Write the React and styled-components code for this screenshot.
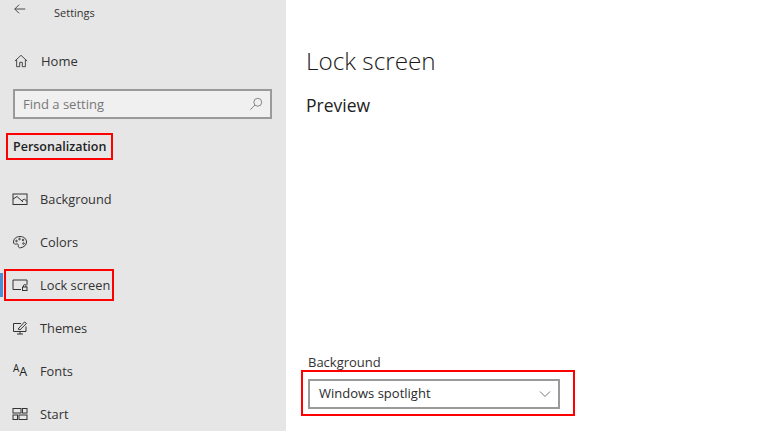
import React from 'react'
import styled, { createGlobalStyle } from 'styled-components'

const GlobalStyle = createGlobalStyle`
  html, body { margin: 0; padding: 0; height: 100%; background: #fff; overflow: hidden; }
  body { font-family: "Open Sans", "Noto Sans", "Liberation Sans", sans-serif; color: #1f1f1f; }
`

const Page = styled.div`
  display: flex;
  width: 768px;
  height: 431px;
  overflow: hidden;
`

const Sidebar = styled.aside`
  width: 286px;
  flex: none;
  background: #e6e6e6;
  box-sizing: border-box;
  position: relative;
`

const TitleBar = styled.div`
  display: flex;
  align-items: center;
  height: 24px;
  padding-left: 13px;
  font-size: 11px;
  color: #333;
  svg { align-self: flex-start; margin-top: 2px; }
  span { margin-left: 27px; }
`

const HomeRow = styled.div`
  display: flex;
  align-items: center;
  height: 26px;
  margin-top: 24px;
  padding-left: 14px;
  font-size: 13px;
  color: #333;
  span { margin-left: 13px; }
`

const SearchBox = styled.div`
  display: flex;
  align-items: center;
  justify-content: space-between;
  box-sizing: border-box;
  width: 259px;
  height: 30px;
  margin: 15px 0 0 13px;
  padding: 0 7px 0 8px;
  background: #f0f0f0;
  border: 2px solid #9a9a9a;
  font-size: 13px;
  color: #777;
`

const RedFrame = styled.div`
  box-sizing: border-box;
  border: 2px solid #ff0000;
  display: inline-flex;
  align-items: center;
`

const GroupFrame = styled(RedFrame)`
  width: 107px;
  height: 27px;
  margin: 14px 0 0 6px;
  padding-left: 5px;
  font-size: 12.5px;
  font-weight: 600;
  color: #222;
`

const NavList = styled.nav`
  display: flex;
  flex-direction: column;
  margin-top: 17px;
`

const NavRow = styled.div`
  display: flex;
  align-items: center;
  height: 43px;
  padding-left: 12px;
  font-size: 12.8px;
  color: #333;
  position: relative;
  span { margin-left: 12px; }
`

const ActiveFrame = styled(RedFrame)`
  position: absolute;
  left: 4px;
  top: 6px;
  width: 110px;
  height: 32px;
`

const ActiveBar = styled.div`
  position: absolute;
  left: 0;
  top: 10px;
  width: 3px;
  height: 24px;
  background: #4a90d0;
`

const Main = styled.main`
  flex: 1;
  padding: 40px 0 0 20px;
  display: flex;
  flex-direction: column;
`

const Heading = styled.h1`
  margin: 0;
  font-size: 24.3px;
  font-weight: 300;
  line-height: 42px;
  color: #1a1a1a;
`

const SubHeading = styled.h2`
  margin: 1px 0 0;
  font-size: 17.5px;
  font-weight: 400;
  line-height: 44px;
  color: #222;
`

const FieldLabel = styled.div`
  margin: 227px 0 0 2px;
  font-size: 13px;
  line-height: 16px;
  color: #333;
`

const SelectFrame = styled(RedFrame)`
  width: 274px;
  height: 46px;
  margin: 0 0 0 -5px;
  padding: 2px 0 0 5px;
`

const Select = styled.div`
  display: flex;
  align-items: center;
  justify-content: space-between;
  box-sizing: border-box;
  width: 252px;
  height: 30px;
  padding: 0 7px 2px 9px;
  border: 2px solid #9a9a9a;
  font-size: 13px;
  color: #2a2a2a;
  svg { margin-top: 2px; }
`

const Icon = ({ children, w = 16, h = 16 }) => (
  <svg width={w} height={h} viewBox="0 0 16 16" fill="none" stroke="#333" strokeWidth="1">
    {children}
  </svg>
)

const icons = {
  Background: (
    <>
      <rect x="1" y="3" width="14" height="10.5" />
      <path d="M1 8 L5 5.5 L11 11 M10 9.5 L12.5 8 L15 10.5" />
    </>
  ),
  Colors: (
    <>
      <path d="M8 2.5 C4 2.5 1.5 5 1.5 8 C1.5 10 3 10.5 4.5 10 C6 9.7 6.5 10.5 6.3 11.5 C6 13 7 14 8.5 13.8 C12 13.3 14.5 11 14.5 8 C14.5 5 12 2.5 8 2.5 Z" />
      <circle cx="4.5" cy="7" r=".8" />
      <circle cx="7.5" cy="5" r=".8" />
      <circle cx="11" cy="6" r=".8" />
      <circle cx="11.5" cy="9.5" r=".8" />
    </>
  ),
  'Lock screen': (
    <>
      <path d="M9 12.5 H1 V3 H15 V8" />
      <rect x="10.5" y="10" width="4.5" height="3.5" />
      <path d="M11.5 10 V8.8 a1 1 0 0 1 2.5 0 V10" />
    </>
  ),
  Themes: (
    <>
      <path d="M9 3.5 H1.5 V11.5 H14 V6.5" />
      <path d="M8 11.5 V14 M5 14 H11" />
      <path d="M6 9 L12.5 2 L14.5 3.5 L8 9.8 Z" />
    </>
  ),
  Start: (
    <>
      <rect x="1" y="2.5" width="8" height="4.5" />
      <rect x="10.5" y="2.5" width="4.5" height="4.5" />
      <rect x="1" y="9" width="4.5" height="4.5" />
      <rect x="7" y="9" width="8" height="4.5" />
    </>
  ),
}

const FontsGlyph = styled.div`
  width: 16px;
  height: 16px;
  display: flex;
  align-items: flex-start;
  justify-content: center;
  font-size: 12.5px;
  line-height: 18px;
  color: #222;
  small { font-size: 10px; line-height: 11px; }
`

const navItems = ['Background', 'Colors', 'Lock screen', 'Themes', 'Fonts', 'Start']

const App = () => (
  <>
    <GlobalStyle />
    <Page>
      <Sidebar>
        <TitleBar>
          <Icon w={14} h={14}>
            <path d="M14 8 H2 M7 3 L2 8 L7 13" />
          </Icon>
          <span>Settings</span>
        </TitleBar>
        <HomeRow>
          <Icon w={14} h={14}>
            <path d="M1 8 L8 1.5 L15 8 M3 6.5 V14.5 H6.5 V9.5 H9.5 V14.5 H13 V6.5" />
          </Icon>
          <span>Home</span>
        </HomeRow>
        <SearchBox>
          Find a setting
          <Icon w={14} h={14}>
            <circle cx="10" cy="6" r="4.5" stroke="#777" />
            <path d="M6.8 9.2 L1.5 14.5" stroke="#777" />
          </Icon>
        </SearchBox>
        <GroupFrame>Personalization</GroupFrame>
        <NavList>
          {navItems.map((item) => (
            <NavRow key={item}>
              {item === 'Lock screen' && <ActiveFrame />}
              {item === 'Lock screen' && <ActiveBar />}
              {item === 'Fonts' ? (
                <FontsGlyph>
                  <small>A</small>A
                </FontsGlyph>
              ) : (
                <Icon>{icons[item]}</Icon>
              )}
              <span>{item}</span>
            </NavRow>
          ))}
        </NavList>
      </Sidebar>
      <Main>
        <Heading>Lock screen</Heading>
        <SubHeading>Preview</SubHeading>
        <FieldLabel>Background</FieldLabel>
        <SelectFrame>
          <Select>
            Windows spotlight
            <svg width="12" height="12" viewBox="0 0 12 12" fill="none" stroke="#777">
              <path d="M1 3.5 L6 8.5 L11 3.5" />
            </svg>
          </Select>
        </SelectFrame>
      </Main>
    </Page>
  </>
)

export default App
